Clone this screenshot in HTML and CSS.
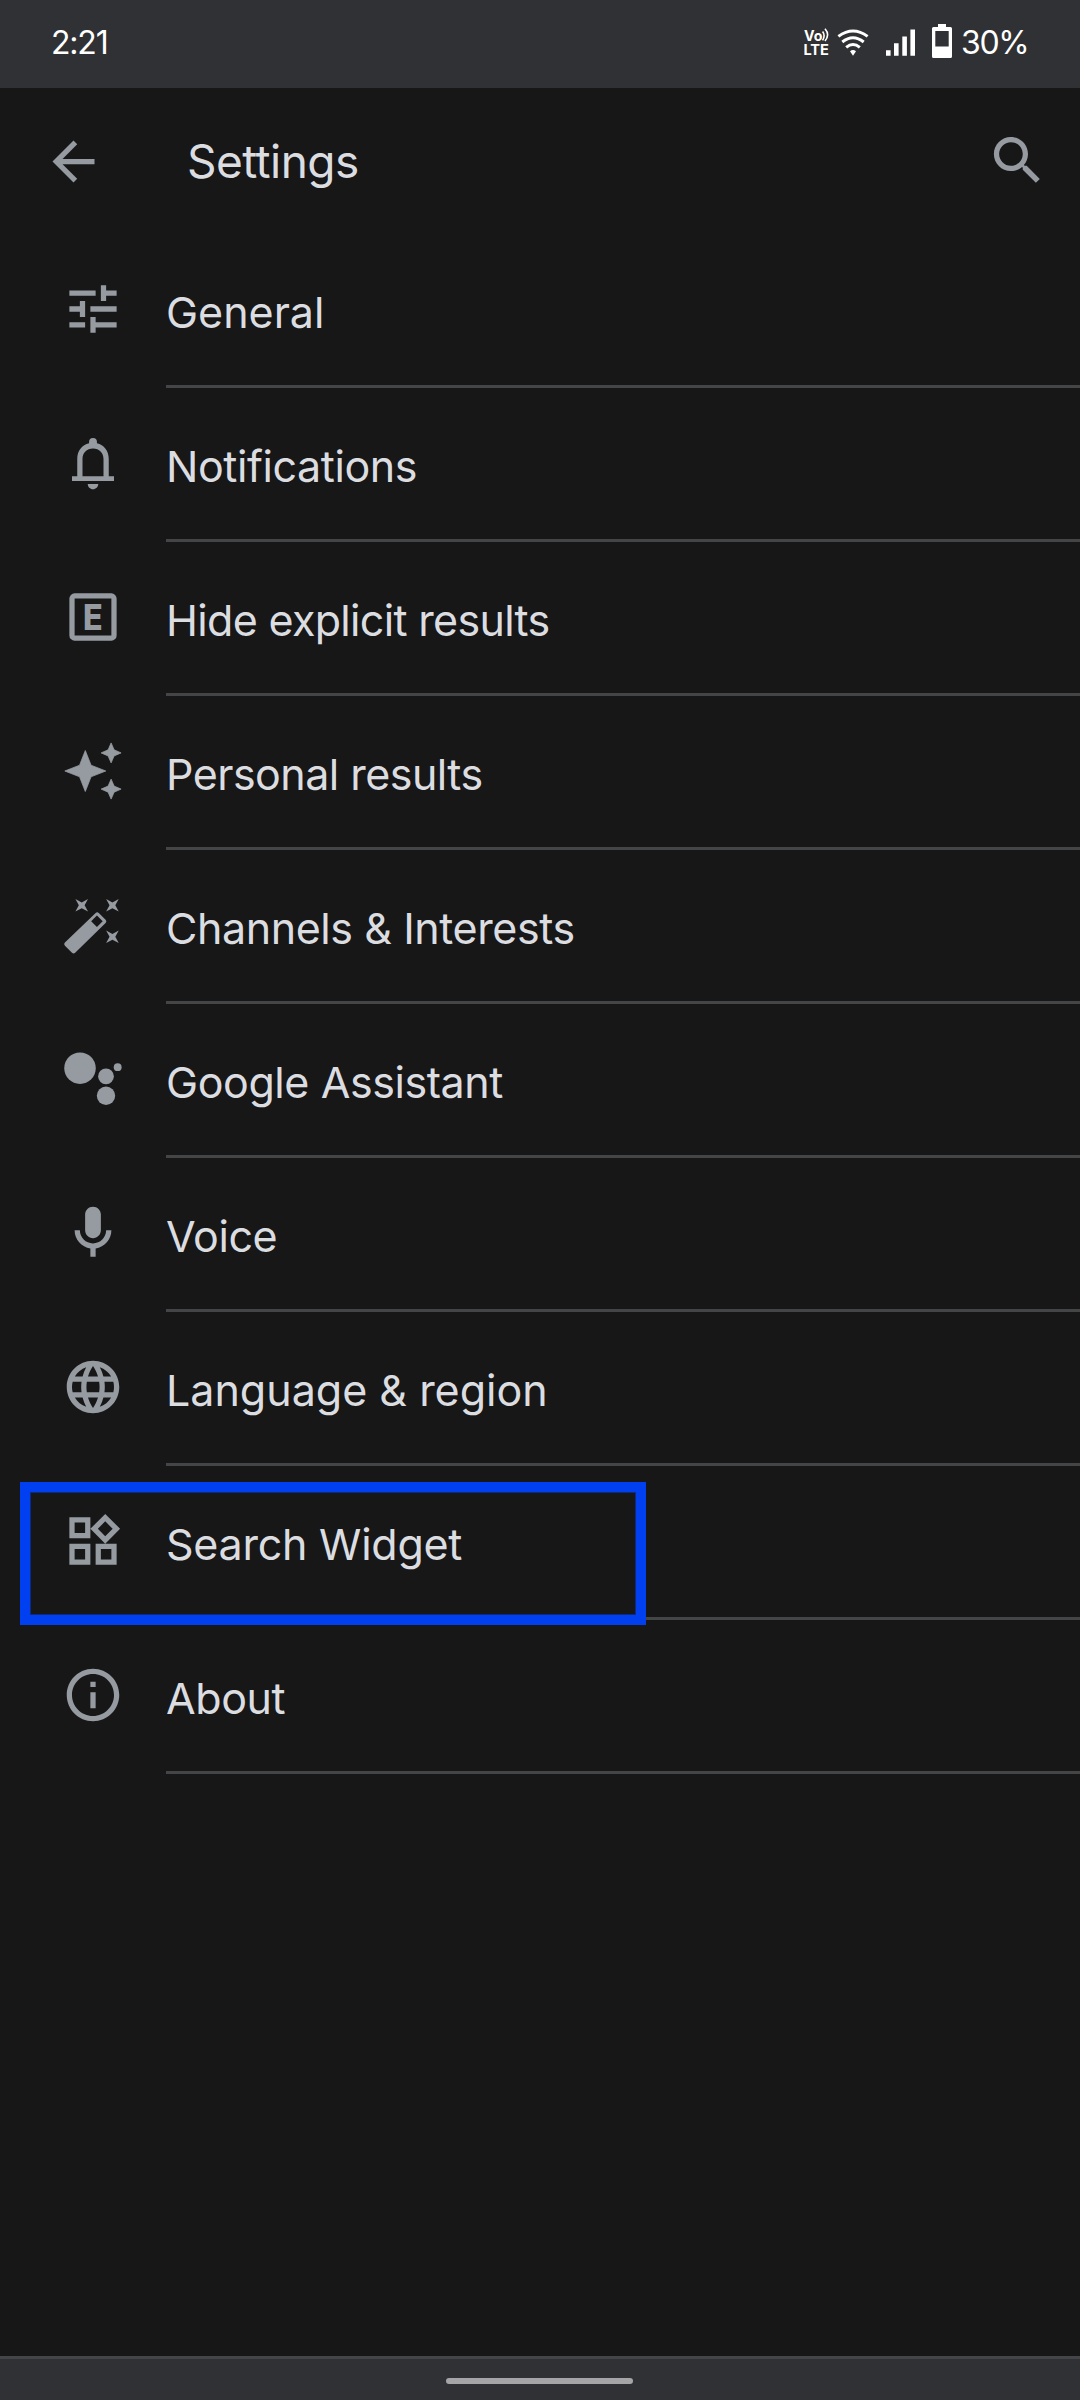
FILE: index.html
```html
<!DOCTYPE html>
<html lang="en">
<head>
  <meta charset="UTF-8">
  <title>Settings</title>
  <link rel="stylesheet" href="styles.css">
</head>
<body>

  <div class="status-bar">
    <span class="clock">2:21</span>
    <div class="status-icons">
      <svg class="volte" viewBox="0 0 26 30">
        <text x="0" y="13.2" class="volte-text" textLength="18.5" lengthAdjust="spacingAndGlyphs">Vo</text>
        <path d="M18.6 3.5q3 4 0 8.8M21 .8q5.2 6 0 12.2" fill="none" stroke="#fff" stroke-width="1.6"/>
        <text x="-.6" y="26.8" class="volte-text" textLength="25.5" lengthAdjust="spacingAndGlyphs">LTE</text>
      </svg>
      <svg class="wifi" viewBox="0 0 32 28">
        <g fill="none" stroke="#fff" stroke-width="3">
          <path d="M1.4 7.4Q16-3.4 30.6 7.4"/>
          <path d="M5.3 13Q16 4.6 26.7 13"/>
          <path d="M9.2 18.3Q16 12.6 22.8 18.3"/>
        </g>
        <path d="M13 22.3q3-2.4 6 0l-3 4.4z" fill="#fff"/>
      </svg>
      <svg class="signal" viewBox="0 0 30 28">
        <path d="M0 21.3h4.6v5.4H0zM8 14.2h4.6v12.5H8zM16.3 7.4h4.6v19.3h-4.6zM24.4.4H29v26.3h-4.6z" fill="#fff"/>
      </svg>
      <svg class="battery" viewBox="0 0 20 34">
        <path fill-rule="evenodd" d="M6 0h8v3h4.5q1.5 0 1.5 1.5v28q0 1.5-1.5 1.5h-17Q0 34 0 32.5v-28Q0 3 1.5 3H6zM3.3 7v15.5h13.4V7z" fill="#fff"/>
      </svg>
      <span class="percent">30%</span>
    </div>
  </div>

  <header class="app-bar">
    <svg class="icon" viewBox="0 0 24 24"><path d="M20 11H7.83l5.59-5.59L12 4l-8 8 8 8 1.41-1.41L7.83 13H20z"/></svg>
    <h1>Settings</h1>
    <svg class="icon search" viewBox="0 0 24 24"><path d="M15.5 14h-.79l-.28-.27C15.41 12.59 16 11.11 16 9.5 16 5.91 13.09 3 9.5 3S3 5.91 3 9.5 5.91 16 9.5 16c1.61 0 3.09-.59 4.23-1.57l.27.28v.79l5 4.99L20.49 19zm-6 0C7.01 14 5 11.99 5 9.5S7.01 5 9.5 5 14 7.01 14 9.5 11.99 14 9.5 14z"/></svg>
  </header>

  <ul class="settings">
    <li>
      <svg class="icon" viewBox="-.19 -.19 24.38 24.38"><path d="M3 17v2h6v-2zM3 5v2h10V5zm10 16v-2h8v-2h-8v-2h-2v6zM7 9v2H3v2h4v2h2V9zm14 4v-2H11v2zm-6-4h2V7h4V5h-4V3h-2z"/></svg>
      <div class="label loose">General</div>
    </li>
    <li>
      <svg class="icon" viewBox="-.19 -.19 24.38 24.38"><path d="M12 22c1.1 0 2-.9 2-2h-4c0 1.1.9 2 2 2zM18 17v-6.5C18 7.4 16.2 5.1 13.5 4.5V4a1.5 1.5 0 0 0-3 0v.5C7.8 5.1 6 7.4 6 10.5V17H4v1.9h16V17zm-2 0H8v-6.500c0-2.400 1.600-4 4-4s4 1.600 4 4z"/></svg>
      <div class="label">Notifications</div>
    </li>
    <li>
      <svg class="icon" viewBox="-.19 -.19 24.38 24.38">
        <rect x="4" y="4" width="16" height="16" rx="1" fill="none" stroke="#969ba1" stroke-width="2"/>
        <text x="8.2" y="17" class="explicit" textLength="7.5" lengthAdjust="spacingAndGlyphs">E</text>
      </svg>
      <div class="label tight">Hide explicit results</div>
    </li>
    <li>
      <svg class="icon" viewBox="-.19 -.19 24.38 24.38"><path d="M9.07 4.2l2.2 5.6 5.6 2.2-5.6 2.2-2.2 5.6-2.2-5.6L1.27 12l5.6-2.2zM18.9 1.3l1.15 2.65 2.65 1.15-2.65 1.15L18.9 8.9l-1.15-2.65L15.1 5.1l2.65-1.15zM18.9 15.1l1.15 2.65 2.65 1.15-2.65 1.15-1.15 2.65-1.15-2.65-2.65-1.15 2.65-1.15z" stroke="#969ba1" stroke-width=".3"/></svg>
      <div class="label snug">Personal results</div>
    </li>
    <li>
      <svg class="icon" viewBox="-.19 -.19 24.38 24.38">
        <path fill-rule="evenodd" d="M13 7.4q.6-.6 1.2 0l2.6 2.6q.6.6 0 1.2L5.2 22.6q-.6.6-1.2 0L1.3 19.9q-.6-.6 0-1.2zM13.5 8.4l-2.2 2.2 2.2 2.2 2.2-2.2z"/>
        <path d="M5.3 2.1l2.4 1.3 2.4-1.3-1.3 2.4 1.3 2.4-2.4-1.3-2.4 1.3 1.3-2.4zM17 2.1l2.4 1.3 2.4-1.3-1.3 2.4 1.3 2.4-2.4-1.3L17 6.900l1.300-2.400zM17 14.100l2.400 1.300 2.400-1.300-1.300 2.400 1.300 2.400-2.400-1.300-2.400 1.300 1.300-2.400z"/>
      </svg>
      <div class="label">Channels &amp; Interests</div>
    </li>
    <li>
      <svg class="icon" viewBox="-.19 -.19 24.38 24.38">
        <circle cx="7.05" cy="7.9" r="6"/>
        <circle cx="16.95" cy="11" r="3"/>
        <circle cx="16.95" cy="18.4" r="3.5"/>
        <circle cx="21.4" cy="7.5" r="1.5"/>
      </svg>
      <div class="label">Google Assistant</div>
    </li>
    <li>
      <svg class="icon" viewBox="-.19 -.19 24.38 24.38"><path d="M12 14c1.66 0 3-1.34 3-3V5c0-1.66-1.34-3-3-3S9 3.34 9 5v6c0 1.66 1.34 3 3 3zm5-3c0 2.76-2.24 5-5 5s-5-2.24-5-5H5c0 3.53 2.61 6.43 6 6.92V21h2v-3.08c3.39-.49 6-3.39 6-6.92z"/></svg>
      <div class="label">Voice</div>
    </li>
    <li>
      <svg class="icon" viewBox="-.19 -.19 24.38 24.38"><path d="M11.99 2C6.47 2 2 6.48 2 12s4.47 10 9.99 10C17.52 22 22 17.52 22 12S17.52 2 11.99 2zm6.93 6h-2.95c-.32-1.25-.78-2.45-1.38-3.56 1.84.63 3.37 1.91 4.33 3.56zM12 4.04c.83 1.2 1.48 2.53 1.91 3.96h-3.82c.43-1.43 1.08-2.76 1.91-3.96zM4.26 14C4.1 13.36 4 12.69 4 12s.1-1.36.26-2h3.38c-.08.66-.14 1.32-.14 2 0 .68.06 1.34.14 2H4.26zm.82 2h2.95c.32 1.25.78 2.45 1.38 3.56-1.84-.63-3.37-1.9-4.33-3.56zm2.95-8H5.08c.96-1.66 2.49-2.93 4.33-3.56C8.81 5.55 8.35 6.75 8.03 8zM12 19.96c-.83-1.2-1.48-2.53-1.91-3.96h3.82c-.43 1.43-1.08 2.76-1.91 3.96zM14.34 14H9.66c-.09-.66-.16-1.32-.16-2 0-.68.07-1.35.16-2h4.68c.09.65.16 1.32.16 2 0 .68-.07 1.34-.16 2zm.25 5.56c.6-1.11 1.06-2.31 1.38-3.56h2.95c-.96 1.65-2.49 2.93-4.33 3.56zM16.36 14c.08-.66.14-1.32.14-2 0-.68-.06-1.34-.14-2h3.38c.16.64.26 1.31.26 2s-.1 1.36-.26 2h-3.38z"/></svg>
      <div class="label loose">Language &amp; region</div>
    </li>
    <li>
      <svg class="icon" viewBox="-.19 -.19 24.38 24.38"><path d="M16.66 4.52l2.83 2.83-2.83 2.83-2.83-2.83 2.83-2.83M9 5v4H5V5h4m10 10v4h-4v-4h4M9 15v4H5v-4h4m7.66-13.31L11 7.34 16.66 13l5.66-5.66-5.66-5.65zM11 3H3v8h8V3zm10 10h-8v8h8v-8zm-10 0H3v8h8v-8z"/></svg>
      <div class="label widget">Search Widget</div>
      <div class="highlight"></div>
    </li>
    <li>
      <svg class="icon" viewBox="-.19 -.19 24.38 24.38"><path d="M11 7h2v2h-2zm0 4h2v6h-2zm1-9C6.48 2 2 6.48 2 12s4.48 10 10 10 10-4.48 10-10S17.52 2 12 2zm0 18c-4.41 0-8-3.59-8-8s3.59-8 8-8 8 3.59 8 8-3.59 8-8 8z"/></svg>
      <div class="label">About</div>
    </li>
  </ul>

  <div class="nav-bar"><div class="handle"></div></div>

</body>
</html>
```
FILE: styles.css
```css
* {
  box-sizing: border-box;
}

body {
  margin: 0;
  height: 2400px;
  display: flex;
  flex-direction: column;
  background-color: #171717;
  color: #dcdde0;
  font-family: Inter, Roboto, sans-serif;
}

.status-bar {
  height: 88px;
  padding: 0 53px 3px 51px;
  display: flex;
  align-items: center;
  justify-content: space-between;
  background-color: #303134;
  color: #fff;
  font-size: 32px;
}

.clock {
  letter-spacing: -1.2px;
}

.status-icons {
  display: flex;
  align-items: center;
}

.percent {
  width: 66px;
  margin-left: 9px;
  letter-spacing: -1.3px;
  white-space: nowrap;
}

.volte {
  width: 26px;
  height: 30px;
  margin-right: 7px;
}

.volte-text {
  font-size: 14.5px;
  font-weight: 700;
  fill: #fff;
}

.wifi {
  width: 32px;
  height: 28px;
  margin-right: 17px;
}

.signal {
  width: 30px;
  height: 28px;
  margin-right: 16px;
}

.battery {
  width: 20px;
  height: 34px;
  margin-bottom: 3px;
}

.app-bar {
  height: 146px;
  padding: 0 31px 0 42px;
  display: flex;
  align-items: center;
}

h1 {
  flex: 1;
  margin: 0 0 0 82px;
  font-size: 46px;
  font-weight: 400;
  letter-spacing: -0.55px;
}

.icon {
  width: 63px;
  height: 63px;
  flex: none;
  fill: #969ba1;
}

.search {
  margin-bottom: 2px;
}

.explicit {
  font-size: 13.75px;
  font-weight: 800;
}

.settings {
  flex: 1;
  margin: 0;
  padding: 0;
  list-style: none;
}

.settings li {
  position: relative;
  height: 154px;
  padding-left: 61px;
  display: flex;
}

.settings .icon {
  width: 64px;
  height: 64px;
  margin-top: 43px;
}

.label {
  flex: 1;
  margin-left: 41px;
  padding-top: 6px;
  border-bottom: 3px solid #434547;
  font-size: 43px;
  line-height: 145px;
  letter-spacing: -0.42px;
}

.loose {
  letter-spacing: 0;
}

.snug {
  letter-spacing: -0.53px;
}

.tight {
  letter-spacing: -0.68px;
}

.widget {
  letter-spacing: -0.25px;
}

/* blue frame over the Search Widget row */
.highlight {
  position: absolute;
  left: 20px;
  top: 16px;
  width: 626px;
  height: 143px;
  border: 10px solid #0040f0;
  box-shadow: inset 0 0 0 1px rgba(0, 64, 240, 0.5);
  z-index: 1;
}

.nav-bar {
  height: 44px;
  padding-right: 1px;
  border-top: 3px solid #444548;
  background-color: #303134;
  display: flex;
  justify-content: center;
}

.handle {
  width: 187px;
  height: 6px;
  margin-top: 19px;
  border-radius: 3px;
  background-color: #a5a5a8;
}
```
